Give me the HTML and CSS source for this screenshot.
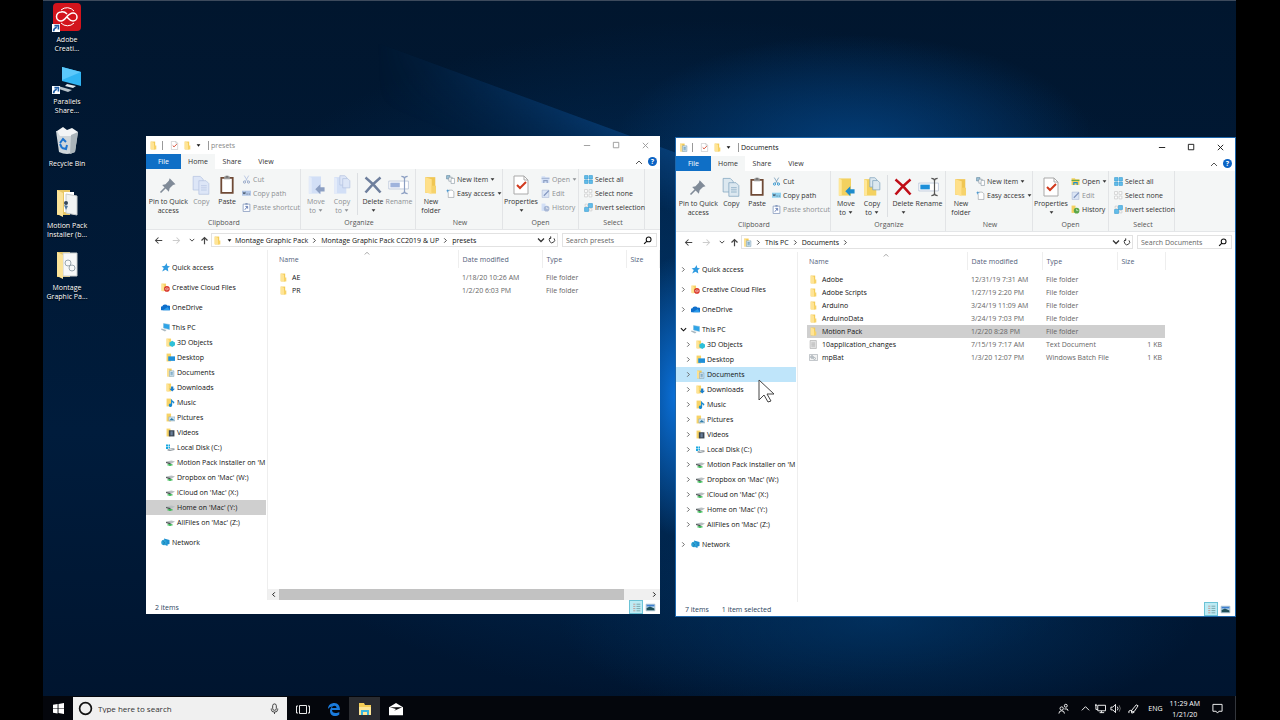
FILE: index.html
```html
<!DOCTYPE html>
<html lang="en">
<head>
  <meta charset="UTF-8">
  <meta name="viewport" content="width=device-width, initial-scale=1.0">
  <title>Desktop</title>
  <link rel="stylesheet" href="styles.css">
</head>
<body>
  <!-- Icon sprite -->
  <svg class="sprite" aria-hidden="true">
    <symbol id="folder" viewBox="0 0 16 16"><path d="M3 1h8v14H3z" fill="#f3cb55"/><path d="M3 1l6 2v12l-6-1z" fill="#ffe495"/><path d="M9 8h4v7H9z" fill="#f7d367"/></symbol>
    <symbol id="docfolder" viewBox="0 0 16 16"><path d="M2 1h8v14H2z" fill="#f3cb55"/><path d="M2 1l4 2v12l-4-1z" fill="#ffe495"/><path d="M6 5h8v10H6z" fill="#d5e6f0" stroke="#7fa3b8"/><path d="M8 8h4M8 10h4M8 12h4" stroke="#3f7fa8"/></symbol>
    <symbol id="check-page" viewBox="0 0 16 20"><path d="M1 1h10l4 4v14H1z" fill="#fff" stroke="#a9a9a9"/><path d="M11 1v4h4" fill="none" stroke="#a9a9a9"/><path d="M4 10l3 3 6-6" fill="none" stroke="#d13a1e" stroke-width="2"/></symbol>
    <symbol id="caret" viewBox="0 0 8 8"><path d="M1 2h6L4 6z" fill="currentColor"/></symbol>
    <symbol id="chev-r" viewBox="0 0 8 8"><path d="M2.500 1.500L5 4 2.500 6.500" fill="none" stroke="currentColor" stroke-width="1.100"/></symbol>
    <symbol id="chev-d" viewBox="0 0 8 8"><path d="M1 2.500l3 3 3-3" fill="none" stroke="currentColor" stroke-width="1.300"/></symbol>
    <symbol id="chev-u" viewBox="0 0 8 8"><path d="M1 6l3-3 3 3" fill="none" stroke="currentColor"/></symbol>
    <symbol id="back" viewBox="0 0 12 12"><path d="M11 6H2M6 2L2 6l4 4" fill="none" stroke="currentColor" stroke-width="1.400"/></symbol>
    <symbol id="forward" viewBox="0 0 12 12"><path d="M1 6h9M6 2l4 4-4 4" fill="none" stroke="currentColor" stroke-width="1.400"/></symbol>
    <symbol id="up" viewBox="0 0 12 12"><path d="M6 11V2M2 6l4-4 4 4" fill="none" stroke="currentColor" stroke-width="1.600"/></symbol>
    <symbol id="refresh" viewBox="0 0 12 12"><path d="M9 3.500A4 4 0 1 1 4 2.600M4 .5v3.200H1.500" fill="none" stroke="currentColor" stroke-width="1.400"/></symbol>
    <symbol id="lens" viewBox="0 0 12 12"><circle cx="7.500" cy="4.500" r="3.200" fill="none" stroke="currentColor" stroke-width="1.400"/><path d="M5.300 6.800L1.500 10.600" stroke="currentColor" stroke-width="1.600"/></symbol>
    <symbol id="min" viewBox="0 0 10 10"><path d="M1 5h7" stroke="currentColor"/></symbol>
    <symbol id="max" viewBox="0 0 10 10"><path d="M1.500 1.500h6v6h-6z" fill="none" stroke="currentColor"/></symbol>
    <symbol id="close" viewBox="0 0 10 10"><path d="M2 2l6 6M8 2L2 8" stroke="currentColor"/></symbol>

    <symbol id="pin" viewBox="0 0 24 24"><path d="M14 4l7 7-3 1-4 4-1 4-8-8 4-1 4-4z" fill="#808b98"/><path d="M9 15l-6 6" stroke="#808b98" stroke-width="2"/></symbol>
    <symbol id="copy" viewBox="0 0 24 28"><path d="M1 2h10l4 4v15H1z" fill="var(--page)" stroke="var(--line)"/><path d="M9 8h10l4 4v15H9z" fill="var(--page)" stroke="var(--line)"/><path d="M12 15h8M12 18h8M12 21h8" stroke="var(--line)"/></symbol>
    <symbol id="paste" viewBox="0 0 24 28"><path d="M4 4h16v21H4z" fill="#fff" stroke="#6f4a36" stroke-width="2.500"/><path d="M8 2h8v4H8z" fill="#9a9a9a"/><path d="M10 1h4v3h-4z" fill="#777"/></symbol>
    <symbol id="cut" viewBox="0 0 16 16"><path d="M4 1l6 10M12 1L6 11" stroke="var(--line)" stroke-width="1.500"/><circle cx="4.500" cy="12.500" r="2" fill="none" stroke="var(--arrow)" stroke-width="1.500"/><circle cx="11.500" cy="12.500" r="2" fill="none" stroke="var(--arrow)" stroke-width="1.500"/></symbol>
    <symbol id="path" viewBox="0 0 16 16"><path d="M0 3h16v9H0z" fill="var(--sky)"/><path d="M2 5l1 4 1-3 1 3 1-4M8 9h2M12 9h2" fill="none" stroke="#345"/></symbol>
    <symbol id="shortcut" viewBox="0 0 16 16"><path d="M2 2h12v13H2z" fill="#fff" stroke="#8a9dc0" stroke-width="1.500"/><path d="M6 0h4v3H6z" fill="#8a9dc0"/><path d="M5 12l4-5M6 6h4v4" fill="none" stroke="#4d6aa8" stroke-width="1.500"/></symbol>
    <symbol id="move" viewBox="0 0 24 28"><path d="M2 2h17v24H2z" fill="var(--folder)"/><path d="M2 2l4 2v22H2z" fill="var(--folder2)"/><path d="M11 20l7-7v4h6v6h-6v4z" fill="var(--arrow)"/></symbol>
    <symbol id="copyto" viewBox="0 0 24 28"><path d="M1 3h17v23H1z" fill="var(--folder)"/><path d="M1 3l4 2v21H1z" fill="var(--folder2)"/><path d="M9 1h7l3 3v10H9z" fill="var(--page)" stroke="var(--line)"/><path d="M13 5h7l3 3v10H13z" fill="var(--page)" stroke="var(--line)"/></symbol>
    <symbol id="delete" viewBox="0 0 24 24"><path d="M3 3q10 8 18 18M21 3Q10 12 3 21" fill="none" stroke="var(--cross)" stroke-width="3"/></symbol>
    <symbol id="rename" viewBox="0 0 28 24"><path d="M1 7h25v10H1z" fill="#fff" stroke="#b5c2d8"/><path d="M3 9h12v6H3z" fill="var(--rename)"/><path d="M17 1q4 0 4 3v16q0 3-4 3M25 1q-4 0-4 3v16q0 3 4 3" fill="none" stroke="var(--ibeam)" stroke-width="1.500"/></symbol>
    <symbol id="bigfolder" viewBox="0 0 24 28"><path d="M4 3h14v22H4z" fill="#f0c653"/><path d="M4 3l9 3v21l-9-3z" fill="#ffe08a"/><path d="M13 15h6v11h-6z" fill="#f6d36b"/></symbol>
    <symbol id="newitem" viewBox="0 0 16 16"><path d="M1 1h6v6H1z" fill="#9cc3d9" stroke="#5b7f96"/><path d="M5 4h6v7H5z" fill="#fff" stroke="#7c8b96"/><path d="M9 6h6v9H9z" fill="#fff" stroke="#7c8b96"/></symbol>
    <symbol id="easy" viewBox="0 0 16 16"><path d="M5 2h6l3 3v10H4V6" fill="#fff" stroke="#8a8f96"/><path d="M1 3h5M3 1v5" stroke="#3d8ec9" stroke-width="1.500"/></symbol>
    <symbol id="open" viewBox="0 0 16 16"><path d="M1 2h6l1 2h7v10H1z" fill="var(--folder)"/><path d="M1 5h14v2H1z" fill="var(--green)"/><path d="M4 9h8v5h-2v-3H6v3H4z" fill="var(--arrow)"/></symbol>
    <symbol id="edit" viewBox="0 0 16 16"><path d="M2 2h12v13H2z" fill="#dbe5f5" stroke="#a5b4d2"/><path d="M5 12l9-9" stroke="#7f93bd" stroke-width="2"/></symbol>
    <symbol id="history" viewBox="0 0 16 16"><path d="M1 1h7v13H1z" fill="var(--folder)"/><circle cx="10" cy="10" r="5" fill="var(--green)"/><path d="M10 7v3h3" fill="none" stroke="#fff"/></symbol>
    <symbol id="selall" viewBox="0 0 16 16"><path d="M1 1h6v6H1zM9 1h6v6H9zM1 9h6v6H1zM9 9h6v6H9z" fill="#63bdea" stroke="#2d95cf"/></symbol>
    <symbol id="selnone" viewBox="0 0 16 16"><path d="M1 1h5v5H1zM9 1h5v5H9zM1 9h5v5H1zM9 9h5v5H9z" fill="#fff" stroke="#bbb"/></symbol>
    <symbol id="selinv" viewBox="0 0 16 16"><path d="M8 1h7v7H8zM1 8h7v7H1z" fill="#63bdea" stroke="#2d95cf"/><path d="M2 2h4v4H2zM10 10h4v4h-4z" fill="#fff" stroke="#bbb"/></symbol>

    <symbol id="star" viewBox="0 0 16 16"><path d="M10 0l1 5 5 1-4 3 1 6-5-3-6 3 3-6-4-3 6-1z" fill="#2f9be0"/></symbol>
    <symbol id="ccf" viewBox="0 0 16 16"><path d="M1 1h8v13H1z" fill="#f7d367"/><path d="M1 1l4 2v12l-4-1z" fill="#ffe495"/><circle cx="10.500" cy="10.500" r="5" fill="#d8352a"/><path d="M7.500 10.500q3-4 6 0-3 4-6 0z" fill="none" stroke="#fff"/></symbol>
    <symbol id="cloud" viewBox="2 2 16 12"><path d="M4 13a3.500 3.500 0 0 1 0-7 6 6 0 0 1 10-1 4 4 0 0 1 3 8z" fill="#0f6fcb"/><path d="M5 13l9-6 4 6z" fill="#2a9bea"/></symbol>
    <symbol id="pc" viewBox="0 0 18 16"><path d="M5 0l12 2v10L5 9z" fill="#2fa4e7" stroke="#7fb8d8"/><path d="M1 10l10 3-3 3-8-4z" fill="#a9b7c0"/></symbol>
    <symbol id="f3d" viewBox="0 0 16 16"><path d="M1 1h8v14H1z" fill="#f7d367"/><path d="M1 1l4 2v12l-4-1z" fill="#ffe495"/><path d="M6 8l5-3 5 3v5l-5 3-5-3z" fill="#2ec0d8"/></symbol>
    <symbol id="fdesk" viewBox="0 0 16 16"><path d="M1 1h8v14H1z" fill="#f7d367"/><path d="M4 6h12v8H4z" fill="#1e8fd8"/></symbol>
    <symbol id="fdown" viewBox="0 0 16 16"><path d="M1 1h8v14H1z" fill="#f7d367"/><path d="M1 1l4 2v12l-4-1z" fill="#ffe495"/><path d="M9 6h4v4h3l-5 5-5-5h3z" fill="#1a7dc9"/></symbol>
    <symbol id="fmusic" viewBox="0 0 16 16"><path d="M1 1h8v14H1z" fill="#f7d367"/><path d="M10 2q1 3 5 5l-1 3-3-3v6a3 3 0 1 1-2-3V2z" fill="#1788cf"/></symbol>
    <symbol id="fpic" viewBox="0 0 16 16"><path d="M1 1h8v14H1z" fill="#f7d367"/><path d="M5 7h11v7H5z" fill="#cfe6f2" stroke="#8ea7b5"/><path d="M6 13l4-4 5 4z" fill="#2f7ba8"/></symbol>
    <symbol id="fvid" viewBox="0 0 16 16"><path d="M1 1h7v14H1z" fill="#f7d367"/><path d="M5 4h10v11H5z" fill="#3a4653"/><path d="M8 6h4v7H8z" fill="#6a7f9a"/></symbol>
    <symbol id="disk" viewBox="0 0 18 16"><path d="M0 2h4v4H0zM5 2h3v4H5zM0 7h4v4H0zM5 7h3v3H5z" fill="#19a7e0"/><path d="M3 12l9-3 5 1v3l-9 2-5-1z" fill="#8f979d"/><path d="M5 12l7-2 4 1-7 2z" fill="#dde2e5"/></symbol>
    <symbol id="netdisk" viewBox="0 0 18 16"><path d="M0 6l11-2 7 2-8 5-10-3z" fill="#b9bfc2"/><path d="M0 7l9 2v3l-9-3z" fill="#4a5050"/><path d="M3 12.500h10M8 11v4" stroke="#2db54a" stroke-width="2.500"/></symbol>
    <symbol id="network" viewBox="0 0 18 16"><path d="M6 0l11 3v8l-4 1v3L8 13z" fill="#1e8fcf"/><circle cx="6" cy="8" r="5.500" fill="#2ea3d6"/><path d="M3 5l4 3-2 4" fill="none" stroke="#0d5f92"/></symbol>
    <symbol id="text" viewBox="0 0 16 16"><path d="M2 1h11v14H2z" fill="#eee" stroke="#999"/><path d="M4 4h7M4 6h7M4 8h7M4 10h7M4 12h7" stroke="#a6a6a6"/></symbol>
    <symbol id="bat" viewBox="0 0 18 16"><path d="M1 2h16v12H1z" fill="#f2f2f2" stroke="#8f979f"/><circle cx="6" cy="7" r="2.500" fill="none" stroke="#7d8a95" stroke-width="1.500"/><circle cx="11" cy="10" r="2" fill="none" stroke="#7d8a95"/></symbol>
    <symbol id="v-details" viewBox="0 0 20 20"><path d="M4 4h4M4 8h4M4 12h4M4 16h4" stroke="#c58e85" stroke-width="1.500"/><path d="M10 4h7M10 8h7M10 12h7M10 16h7" stroke="#6f9a9f" stroke-width="1.500"/></symbol>
    <symbol id="v-large" viewBox="0 0 20 20"><path d="M2 4h16v12H2z" fill="#b9d7ea" stroke="#8fa9b8"/><path d="M3 11l6-3 8 4v3H3z" fill="#1f4f58"/><path d="M3 5h14v3H3z" fill="#3f7fd0"/></symbol>
    <symbol id="link" viewBox="0 0 10 10"><path d="M0 0h10v10H0z" fill="#fff"/><path d="M2 9q0-4 4-5M3 2h5v5" fill="none" stroke="#1f5fa8" stroke-width="2"/></symbol>
  </svg>

  <div class="desktop">
    <main class="workspace">
      <svg class="wallpaper" viewBox="0 0 1200 700" preserveAspectRatio="none" aria-hidden="true">
        <defs>
          <linearGradient id="ray" gradientUnits="userSpaceOnUse" x1="520" y1="110" x2="500" y2="165">
            <stop offset="0" stop-color="#0a4a8c" stop-opacity=".6"/>
            <stop offset="1" stop-color="#0a4a8c" stop-opacity="0"/>
          </linearGradient>
        </defs>
        <path d="M330 40L640 154v100L330 140z" fill="url(#ray)"/>
      </svg>
      <nav class="shortcuts" aria-label="Desktop">
        <a class="shortcut" href="#">
          <svg viewBox="0 0 30 30"><rect x="1" y="1" width="28" height="28" rx="4" fill="#d3141c"/><path d="M15 12c-2-2-4-2.500-6-2a4.500 4.500 0 0 0 0 9c5 0 6-8 12-8a4 4 0 0 1 0 8c-3 0-4-2-6-4" fill="none" stroke="#fff" stroke-width="1.500"/><path d="M9 8a9 9 0 0 1 13 1M22 21a9 9 0 0 1-13 0" fill="none" stroke="#fff"/><use href="#link" x="0" y="22" width="8" height="8"/></svg>
          <span>Adobe Creati...</span>
        </a>
        <a class="shortcut" href="#">
          <svg viewBox="0 0 30 30"><path d="M10 3l19 5v14l-19-5z" fill="#30b4f2"/><path d="M10 3l19 5-19 8z" fill="#5cc8fa"/><path d="M15 20l9 2-3 2-8-2z" fill="#dfe6ea"/><path d="M6 22l14 4-4 2-12-4z" fill="#b7c2c9"/><use href="#link" x="0" y="22" width="8" height="8"/></svg>
          <span>Parallels Share...</span>
        </a>
        <a class="shortcut" href="#">
          <svg viewBox="0 0 30 30"><path d="M4 5l3 21q8 4 16 0l3-20z" fill="#cfd6da"/><path d="M5 5l6-4 4 3 5-2 6 4-4 4H8z" fill="#f3f5f6"/><path d="M19 9l7-3-3 20-5 2z" fill="#aab4ba"/><path d="M8 17l3-4 3 3M15 19l-1 4-4-1M10 22l-2-4" fill="none" stroke="#1d74cf" stroke-width="2"/></svg>
          <span class="full">Recycle Bin</span>
        </a>
        <a class="shortcut" href="#">
          <svg viewBox="0 0 30 30"><path d="M5 2h13v25H5z" fill="#e8c766"/><path d="M12 4h10v20H12z" fill="#fff"/><path d="M14 6l11 2v19l-11-2z" fill="#f1f3f3" stroke="#c8cccc"/><path d="M5 2l6 3v24l-6-3z" fill="#fbe398"/><circle cx="14" cy="15" r="2" fill="#33475c"/><path d="M12 17l4 1-2 4z" fill="#5279a0"/></svg>
          <span class="full">Motion Pack Installer (b...</span>
        </a>
        <a class="shortcut" href="#">
          <svg viewBox="0 0 30 30"><path d="M5 2h13v25H5z" fill="#e8c766"/><path d="M11 3h14v23H11z" fill="#f7f8f8" stroke="#c8cccc"/><path d="M5 2l6 3v24l-6-3z" fill="#fbe398"/><circle cx="16" cy="13" r="3" fill="none" stroke="#9aa6ae"/><circle cx="20" cy="18" r="3" fill="none" stroke="#9aa6ae"/></svg>
          <span class="full">Montage Graphic Pa...</span>
        </a>
      </nav>

      <section class="window window-presets" aria-label="presets">
        <header class="titlebar">
          <div class="quick">
            <svg class="ico"><use href="#folder"/></svg><i></i>
            <svg class="ico"><use href="#check-page"/></svg>
            <svg class="ico"><use href="#folder"/></svg>
            <svg class="tiny"><use href="#caret"/></svg><i></i>
          </div>
          <h1>presets</h1>
          <button class="wbtn" aria-label="Minimize"><svg><use href="#min"/></svg></button>
          <button class="wbtn" aria-label="Maximize"><svg><use href="#max"/></svg></button>
          <button class="wbtn" aria-label="Close"><svg><use href="#close"/></svg></button>
        </header>
        <div class="tabs">
          <button class="tab file">File</button>
          <button class="tab current">Home</button>
          <button class="tab">Share</button>
          <button class="tab">View</button>
          <button class="collapse" aria-label="Collapse ribbon"><svg><use href="#chev-u"/></svg></button>
          <button class="help" aria-label="Help">?</button>
        </div>
        <div class="ribbon">
          <div class="group clipboard">
            <div class="tools">
              <button class="big wide"><svg><use href="#pin"/></svg>Pin to Quick access</button>
              <button class="big off"><svg><use href="#copy"/></svg>Copy</button>
              <button class="big"><svg><use href="#paste"/></svg>Paste</button>
              <div class="stack">
                <button class="small off"><svg><use href="#cut"/></svg>Cut</button>
                <button class="small off"><svg><use href="#path"/></svg>Copy path</button>
                <button class="small off"><svg><use href="#shortcut"/></svg>Paste shortcut</button>
              </div>
            </div>
            <p>Clipboard</p>
          </div>
          <div class="group organize">
            <div class="tools">
              <button class="big off"><svg><use href="#move"/></svg>Move<span>to <svg class="tiny"><use href="#caret"/></svg></span></button>
              <button class="big off"><svg><use href="#copyto"/></svg>Copy<span>to <svg class="tiny"><use href="#caret"/></svg></span></button>
              <hr>
              <button class="big dim"><svg><use href="#delete"/></svg>Delete<span><svg class="tiny"><use href="#caret"/></svg></span></button>
              <button class="big off"><svg><use href="#rename"/></svg>Rename</button>
            </div>
            <p>Organize</p>
          </div>
          <div class="group new">
            <div class="tools">
              <button class="big"><svg><use href="#bigfolder"/></svg>New folder</button>
              <div class="stack">
                <button class="small"><svg><use href="#newitem"/></svg>New item <svg class="tiny"><use href="#caret"/></svg></button>
                <button class="small"><svg><use href="#easy"/></svg>Easy access <svg class="tiny"><use href="#caret"/></svg></button>
              </div>
            </div>
            <p>New</p>
          </div>
          <div class="group opening">
            <div class="tools">
              <button class="big prop"><svg><use href="#check-page"/></svg>Properties<span><svg class="tiny"><use href="#caret"/></svg></span></button>
              <div class="stack">
                <button class="small off"><svg><use href="#open"/></svg>Open <svg class="tiny"><use href="#caret"/></svg></button>
                <button class="small off"><svg><use href="#edit"/></svg>Edit</button>
                <button class="small off"><svg><use href="#history"/></svg>History</button>
              </div>
            </div>
            <p>Open</p>
          </div>
          <div class="group select">
            <div class="tools">
              <div class="stack">
                <button class="small"><svg><use href="#selall"/></svg>Select all</button>
                <button class="small"><svg><use href="#selnone"/></svg>Select none</button>
                <button class="small"><svg><use href="#selinv"/></svg>Invert selection</button>
              </div>
            </div>
            <p>Select</p>
          </div>
        </div>
        <div class="address">
          <button class="nav-btn" aria-label="Back"><svg><use href="#back"/></svg></button>
          <button class="nav-btn faint" aria-label="Forward"><svg><use href="#forward"/></svg></button>
          <button class="nav-btn slim" aria-label="Recent"><svg class="tiny"><use href="#chev-d"/></svg></button>
          <button class="nav-btn slim" aria-label="Up"><svg><use href="#up"/></svg></button>
          <div class="crumbs">
            <svg class="ico"><use href="#folder"/></svg>
            <svg class="tiny"><use href="#caret"/></svg>
            <a href="#">Montage Graphic Pack</a><svg class="sep"><use href="#chev-r"/></svg>
            <a href="#">Montage Graphic Pack CC2019 &amp; UP</a><svg class="sep"><use href="#chev-r"/></svg>
            <a href="#">presets</a>
            <button class="end" aria-label="History"><svg><use href="#chev-d"/></svg></button>
            <button class="end" aria-label="Refresh"><svg><use href="#refresh"/></svg></button>
          </div>
          <label class="search"><input type="text" placeholder="Search presets" aria-label="Search presets"><svg><use href="#lens"/></svg></label>
        </div>
        <div class="content">
          <nav class="tree plain" aria-label="Folders">
            <a class="root" href="#"><svg class="ico"><use href="#star"/></svg>Quick access</a>
            <a class="root" href="#"><svg class="ico"><use href="#ccf"/></svg>Creative Cloud Files</a>
            <a class="root" href="#"><svg class="ico"><use href="#cloud"/></svg>OneDrive</a>
            <a class="root" href="#"><svg class="ico"><use href="#pc"/></svg>This PC</a>
            <a href="#"><svg class="ico"><use href="#f3d"/></svg>3D Objects</a>
            <a href="#"><svg class="ico"><use href="#fdesk"/></svg>Desktop</a>
            <a href="#"><svg class="ico"><use href="#docfolder"/></svg>Documents</a>
            <a href="#"><svg class="ico"><use href="#fdown"/></svg>Downloads</a>
            <a href="#"><svg class="ico"><use href="#fmusic"/></svg>Music</a>
            <a href="#"><svg class="ico"><use href="#fpic"/></svg>Pictures</a>
            <a href="#"><svg class="ico"><use href="#fvid"/></svg>Videos</a>
            <a href="#"><svg class="ico"><use href="#disk"/></svg>Local Disk (C:)</a>
            <a href="#"><svg class="ico"><use href="#netdisk"/></svg>Motion Pack Installer on 'M</a>
            <a href="#"><svg class="ico"><use href="#netdisk"/></svg>Dropbox on 'Mac' (W:)</a>
            <a href="#"><svg class="ico"><use href="#netdisk"/></svg>iCloud on 'Mac' (X:)</a>
            <a class="selected" href="#"><svg class="ico"><use href="#netdisk"/></svg>Home on 'Mac' (Y:)</a>
            <a href="#"><svg class="ico"><use href="#netdisk"/></svg>AllFiles on 'Mac' (Z:)</a>
            <a class="root" href="#"><svg class="ico"><use href="#network"/></svg>Network</a>
          </nav>
          <div class="files">
            <svg class="sort"><use href="#chev-u"/></svg>
            <table>
              <colgroup><col class="c-name-l"><col class="c-date-l"><col class="c-type-l"><col></colgroup>
              <thead><tr><th>Name</th><th>Date modified</th><th>Type</th><th>Size</th></tr></thead>
              <tbody>
                <tr><td><svg class="ico"><use href="#folder"/></svg>AE</td><td>1/18/20 10:26 AM</td><td>File folder</td><td></td></tr>
                <tr><td><svg class="ico"><use href="#folder"/></svg>PR</td><td>1/2/20 6:03 PM</td><td>File folder</td><td></td></tr>
              </tbody>
            </table>
            <div class="hscroll">
              <button aria-label="Scroll left"><svg class="sep flip"><use href="#chev-r"/></svg></button>
              <div class="thumb"></div>
              <button aria-label="Scroll right"><svg class="sep"><use href="#chev-r"/></svg></button>
            </div>
          </div>
        </div>
        <footer class="status">
          <span>2 items</span>
          <button class="view on" aria-label="Details"><svg><use href="#v-details"/></svg></button>
          <button class="view" aria-label="Large icons"><svg><use href="#v-large"/></svg></button>
        </footer>
      </section>

      <section class="window window-documents" aria-label="Documents">
        <header class="titlebar">
          <div class="quick">
            <svg class="ico"><use href="#docfolder"/></svg><i></i>
            <svg class="ico"><use href="#check-page"/></svg>
            <svg class="ico"><use href="#folder"/></svg>
            <svg class="tiny"><use href="#caret"/></svg><i></i>
          </div>
          <h1>Documents</h1>
          <button class="wbtn" aria-label="Minimize"><svg><use href="#min"/></svg></button>
          <button class="wbtn" aria-label="Maximize"><svg><use href="#max"/></svg></button>
          <button class="wbtn" aria-label="Close"><svg><use href="#close"/></svg></button>
        </header>
        <div class="tabs">
          <button class="tab file">File</button>
          <button class="tab current">Home</button>
          <button class="tab">Share</button>
          <button class="tab">View</button>
          <button class="collapse" aria-label="Collapse ribbon"><svg><use href="#chev-u"/></svg></button>
          <button class="help" aria-label="Help">?</button>
        </div>
        <div class="ribbon">
          <div class="group clipboard">
            <div class="tools">
              <button class="big wide"><svg><use href="#pin"/></svg>Pin to Quick access</button>
              <button class="big"><svg><use href="#copy"/></svg>Copy</button>
              <button class="big"><svg><use href="#paste"/></svg>Paste</button>
              <div class="stack">
                <button class="small"><svg><use href="#cut"/></svg>Cut</button>
                <button class="small"><svg><use href="#path"/></svg>Copy path</button>
                <button class="small off"><svg><use href="#shortcut"/></svg>Paste shortcut</button>
              </div>
            </div>
            <p>Clipboard</p>
          </div>
          <div class="group organize">
            <div class="tools">
              <button class="big"><svg><use href="#move"/></svg>Move<span>to <svg class="tiny"><use href="#caret"/></svg></span></button>
              <button class="big"><svg><use href="#copyto"/></svg>Copy<span>to <svg class="tiny"><use href="#caret"/></svg></span></button>
              <hr>
              <button class="big"><svg><use href="#delete"/></svg>Delete<span><svg class="tiny"><use href="#caret"/></svg></span></button>
              <button class="big"><svg><use href="#rename"/></svg>Rename</button>
            </div>
            <p>Organize</p>
          </div>
          <div class="group new">
            <div class="tools">
              <button class="big"><svg><use href="#bigfolder"/></svg>New folder</button>
              <div class="stack">
                <button class="small"><svg><use href="#newitem"/></svg>New item <svg class="tiny"><use href="#caret"/></svg></button>
                <button class="small"><svg><use href="#easy"/></svg>Easy access <svg class="tiny"><use href="#caret"/></svg></button>
              </div>
            </div>
            <p>New</p>
          </div>
          <div class="group opening">
            <div class="tools">
              <button class="big prop"><svg><use href="#check-page"/></svg>Properties<span><svg class="tiny"><use href="#caret"/></svg></span></button>
              <div class="stack">
                <button class="small"><svg><use href="#open"/></svg>Open <svg class="tiny"><use href="#caret"/></svg></button>
                <button class="small off"><svg><use href="#edit"/></svg>Edit</button>
                <button class="small"><svg><use href="#history"/></svg>History</button>
              </div>
            </div>
            <p>Open</p>
          </div>
          <div class="group select">
            <div class="tools">
              <div class="stack">
                <button class="small"><svg><use href="#selall"/></svg>Select all</button>
                <button class="small"><svg><use href="#selnone"/></svg>Select none</button>
                <button class="small"><svg><use href="#selinv"/></svg>Invert selection</button>
              </div>
            </div>
            <p>Select</p>
          </div>
        </div>
        <div class="address">
          <button class="nav-btn" aria-label="Back"><svg><use href="#back"/></svg></button>
          <button class="nav-btn faint" aria-label="Forward"><svg><use href="#forward"/></svg></button>
          <button class="nav-btn slim" aria-label="Recent"><svg class="tiny"><use href="#chev-d"/></svg></button>
          <button class="nav-btn slim" aria-label="Up"><svg><use href="#up"/></svg></button>
          <div class="crumbs">
            <svg class="ico"><use href="#docfolder"/></svg>
            <svg class="sep"><use href="#chev-r"/></svg>
            <a href="#">This PC</a><svg class="sep"><use href="#chev-r"/></svg>
            <a href="#">Documents</a><svg class="sep"><use href="#chev-r"/></svg>
            <button class="end" aria-label="History"><svg><use href="#chev-d"/></svg></button>
            <button class="end" aria-label="Refresh"><svg><use href="#refresh"/></svg></button>
          </div>
          <label class="search"><input type="text" placeholder="Search Documents" aria-label="Search Documents"><svg><use href="#lens"/></svg></label>
        </div>
        <div class="content">
          <nav class="tree" aria-label="Folders">
            <a class="root" href="#"><svg class="sep"><use href="#chev-r"/></svg><svg class="ico"><use href="#star"/></svg>Quick access</a>
            <a class="root" href="#"><svg class="sep"><use href="#chev-r"/></svg><svg class="ico"><use href="#ccf"/></svg>Creative Cloud Files</a>
            <a class="root" href="#"><svg class="sep"><use href="#chev-r"/></svg><svg class="ico"><use href="#cloud"/></svg>OneDrive</a>
            <a class="root" href="#"><svg class="sep expanded"><use href="#chev-d"/></svg><svg class="ico"><use href="#pc"/></svg>This PC</a>
            <a href="#"><svg class="sep"><use href="#chev-r"/></svg><svg class="ico"><use href="#f3d"/></svg>3D Objects</a>
            <a href="#"><svg class="sep"><use href="#chev-r"/></svg><svg class="ico"><use href="#fdesk"/></svg>Desktop</a>
            <a class="hovered" href="#"><svg class="sep"><use href="#chev-r"/></svg><svg class="ico"><use href="#docfolder"/></svg>Documents</a>
            <a href="#"><svg class="sep"><use href="#chev-r"/></svg><svg class="ico"><use href="#fdown"/></svg>Downloads</a>
            <a href="#"><svg class="sep"><use href="#chev-r"/></svg><svg class="ico"><use href="#fmusic"/></svg>Music</a>
            <a href="#"><svg class="sep"><use href="#chev-r"/></svg><svg class="ico"><use href="#fpic"/></svg>Pictures</a>
            <a href="#"><svg class="sep"><use href="#chev-r"/></svg><svg class="ico"><use href="#fvid"/></svg>Videos</a>
            <a href="#"><svg class="sep"><use href="#chev-r"/></svg><svg class="ico"><use href="#disk"/></svg>Local Disk (C:)</a>
            <a href="#"><svg class="sep"><use href="#chev-r"/></svg><svg class="ico"><use href="#netdisk"/></svg>Motion Pack Installer on 'M</a>
            <a href="#"><svg class="sep"><use href="#chev-r"/></svg><svg class="ico"><use href="#netdisk"/></svg>Dropbox on 'Mac' (W:)</a>
            <a href="#"><svg class="sep"><use href="#chev-r"/></svg><svg class="ico"><use href="#netdisk"/></svg>iCloud on 'Mac' (X:)</a>
            <a href="#"><svg class="sep"><use href="#chev-r"/></svg><svg class="ico"><use href="#netdisk"/></svg>Home on 'Mac' (Y:)</a>
            <a href="#"><svg class="sep"><use href="#chev-r"/></svg><svg class="ico"><use href="#netdisk"/></svg>AllFiles on 'Mac' (Z:)</a>
            <a class="root" href="#"><svg class="sep"><use href="#chev-r"/></svg><svg class="ico"><use href="#network"/></svg>Network</a>
          </nav>
          <div class="files">
            <svg class="sort"><use href="#chev-u"/></svg>
            <table class="narrow">
              <colgroup><col class="c-name"><col class="c-date"><col class="c-type"><col class="c-size"></colgroup>
              <thead><tr><th>Name</th><th>Date modified</th><th>Type</th><th>Size</th></tr></thead>
              <tbody>
                <tr><td><svg class="ico"><use href="#folder"/></svg>Adobe</td><td>12/31/19 7:31 AM</td><td>File folder</td><td></td></tr>
                <tr><td><svg class="ico"><use href="#folder"/></svg>Adobe Scripts</td><td>1/27/19 2:20 PM</td><td>File folder</td><td></td></tr>
                <tr><td><svg class="ico"><use href="#folder"/></svg>Arduino</td><td>3/24/19 11:09 AM</td><td>File folder</td><td></td></tr>
                <tr><td><svg class="ico"><use href="#folder"/></svg>ArduinoData</td><td>3/24/19 7:03 PM</td><td>File folder</td><td></td></tr>
                <tr class="selected"><td><svg class="ico"><use href="#folder"/></svg>Motion Pack</td><td>1/2/20 8:28 PM</td><td>File folder</td><td></td></tr>
                <tr><td><svg class="ico"><use href="#text"/></svg>10application_changes</td><td>7/15/19 7:17 AM</td><td>Text Document</td><td>1 KB</td></tr>
                <tr><td><svg class="ico"><use href="#bat"/></svg>mpBat</td><td>1/3/20 12:07 PM</td><td>Windows Batch File</td><td>1 KB</td></tr>
              </tbody>
            </table>
          </div>
        </div>
        <footer class="status">
          <span>7 items</span><span>1 item selected</span>
          <button class="view on" aria-label="Details"><svg><use href="#v-details"/></svg></button>
          <button class="view" aria-label="Large icons"><svg><use href="#v-large"/></svg></button>
        </footer>
      </section>

      <svg class="cursor" viewBox="0 0 17 24"><path d="M1 1v20l5-5 4 7 3-1-4-7h7z" fill="#fff" stroke="#444"/></svg>
    </main>

    <footer class="taskbar">
      <button class="start" aria-label="Start"><svg viewBox="0 0 12 12"><path d="M0 2l5-1v5H0zM6 1l6-1v6H6zM0 6.500h5v5l-5-1zM6 6.500h6V12l-6-1z" fill="#fff"/></svg></button>
      <label class="taskbar-search">
        <svg viewBox="0 0 14 14"><circle cx="7" cy="7" r="5.500" fill="none" stroke="#111" stroke-width="1.600"/></svg>
        <input type="text" placeholder="Type here to search" aria-label="Type here to search">
        <svg viewBox="0 0 12 12"><rect x="4" y="1" width="4" height="7" rx="2" fill="none" stroke="#333"/><path d="M2.500 6v1a3.500 3 0 0 0 7 0V6M6 10v2" fill="none" stroke="#333"/></svg>
      </label>
      <button class="app" aria-label="Task view"><svg viewBox="0 0 14 14"><path d="M3.500 3.500h7v8h-7zM2 4H.5v7H2M12 4h1.500v7H12" fill="none" stroke="#e8e8e8"/></svg></button>
      <button class="app" aria-label="Edge"><svg viewBox="0 0 14 14"><path d="M1 7C1 3 4 1 7.500 1 11 1 13 4 13 8H5c0 2 1.500 3 3.500 3 1.500 0 2.500-.4 3.800-1v2.500C11 13.500 9.500 14 8 14c-3 0-5-2-5-5 0-2 1-3.500 2.500-4.500C3.500 4.600 2 5.500 1 7zm4-1h4.500C9.500 4.500 8.800 3.800 7.500 3.800S5.200 4.700 5 6z" fill="#1a7bdc"/></svg></button>
      <button class="app active" aria-label="File Explorer"><svg viewBox="0 0 14 14"><path d="M1 1h5l1 2h6v10H1z" fill="#f3cd57"/><path d="M1 5h12v8H1z" fill="#fde596"/><path d="M3 8h8v5H9v-3H5v3H3z" fill="#39b5dd"/></svg></button>
      <button class="app" aria-label="Mail"><svg viewBox="0 0 16 14"><path d="M0 5l8-5 8 5v9H0z" fill="#fff"/><path d="M1 5h14l-9 4 2-2z" fill="#0a0a0c"/></svg></button>
      <div class="tray">
        <svg viewBox="0 0 12 12"><circle cx="4" cy="6" r="1.800" fill="none" stroke="#fff"/><circle cx="8.500" cy="3" r="1.600" fill="none" stroke="#fff"/><path d="M1 11.500q0-3 3-3t3 3M7 6.500q4-1 4 2" fill="none" stroke="#fff"/></svg>
        <svg class="gap-l" viewBox="0 0 12 12"><path d="M2 8l4-4 4 4" fill="none" stroke="#fff"/></svg>
        <svg class="gap-s" viewBox="0 0 12 12"><path d="M3 2.500h8.500v6H3zM5 10.500h5M7 8.500v2M1 1v6h2M0 2.500h2" fill="none" stroke="#fff"/></svg>
        <svg class="gap-s" viewBox="0 0 12 12"><path d="M1 4.500h2l3-3v9l-3-3H1z" fill="none" stroke="#fff"/><path d="M8 4q1.500 2 0 4" fill="none" stroke="#fff"/><path d="M10 2.500q2.500 3.500 0 7" fill="none" stroke="#777"/></svg>
        <svg class="gap-m" viewBox="0 0 12 12"><path d="M4 8l5-6 2 1-4 6-3 1zM1 11q-1-3 2-3 2 0 1 2t3 0" fill="none" stroke="#fff"/></svg>
        <span class="lang">ENG</span>
        <time>11:29 AM<br>1/21/20</time>
        <svg class="note" viewBox="0 0 12 12"><path d="M1 1.500h10v7.500H7.500L6 11 4.500 9H1z" fill="none" stroke="#fff"/></svg>
      </div>
    </footer>
  </div>
</body>
</html>
```
FILE: styles.css
```css
* {
  box-sizing: border-box;
}

body {
  margin: 0;
  background: #000;
  font-family: "Open Sans", "Noto Sans", sans-serif;
  font-size: 7px;
  line-height: 9px;
  color: #111;
}

a {
  color: inherit;
  text-decoration: none;
}

button,
input {
  margin: 0;
  padding: 0;
  border: none;
  background: none;
  font: inherit;
  color: inherit;
}

svg {
  display: block;
  flex: none;
}

.sprite {
  position: absolute;
  width: 0;
  height: 0;
}

.ico {
  width: 9px;
  height: 9px;
}

.sep {
  width: 7px;
  height: 7px;
}

.tiny {
  width: 5px;
  height: 5px;
}

/* Desktop */

.desktop {
  display: flex;
  flex-direction: column;
  height: 100vh;
  margin: 0 44px 0 43px;
  border-top: 1px solid #3d4a5c;
  background:
    radial-gradient(ellipse 50px 140px at 53% 55%, #0b6fd6, rgba(11, 111, 214, 0)),
    radial-gradient(ellipse 240px 110px at 68% 20%, rgba(4, 68, 132, 0.8), rgba(2, 50, 100, 0)),
    radial-gradient(ellipse 320px 110px at 70% 86%, rgba(2, 60, 114, 0.6), rgba(2, 50, 100, 0)),
    radial-gradient(ellipse 560px 340px at 56% 50%, #003468, rgba(0, 40, 80, 0)),
    linear-gradient(#01162e, #001c3c 60%, #00142e);
}

.workspace {
  position: relative;
  flex: 1;
  overflow: hidden;
}

.wallpaper {
  position: absolute;
  inset: 0;
  width: 100%;
  height: 100%;
  mask-image: linear-gradient(90deg, transparent 28%, #000 50%);
}

.shortcuts {
  position: relative;
  display: grid;
  grid-auto-rows: 62px;
  width: 48px;
}

.shortcut {
  display: flex;
  flex-direction: column;
  align-items: center;
  color: #fff;
  text-align: center;
  text-shadow: 0 1px 1px #000;
}

.shortcut svg {
  width: 30px;
  height: 30px;
  margin: 1px 0 3px;
}

.shortcut span {
  width: 34px;
}

.shortcut .full {
  width: 100%;
}

/* Explorer window */

.window {
  position: absolute;
  display: flex;
  flex-direction: column;
  background: #fff;
  overflow: hidden;
  --page: #dce8f0;
  --line: #7ba0bb;
  --arrow: #1e8ccc;
  --sky: #8fd0ee;
  --folder: #f3d160;
  --folder2: #ffe798;
  --cross: #c00d17;
  --rename: #1c8fd9;
  --ibeam: #555;
  --green: #5aa648;
}

.window-presets {
  inset: 135px 576px 82px 103px;
}

.window-documents {
  inset: 137px 1px 80px 633px;
  outline: 1px solid #1d66ab;
}

.titlebar {
  display: flex;
  align-items: center;
  height: 18px;
}

.quick {
  display: flex;
  align-items: center;
  gap: 4px;
  padding: 0 2px 0 3px;
}

.quick i {
  width: 1px;
  height: 9px;
  margin-right: 3px;
  background: #999;
}

.quick i:last-child {
  margin: 0 0 0 3px;
}

.titlebar h1 {
  flex: 1;
  margin: 0;
  font-size: 7px;
  font-weight: 400;
  color: #111;
}

.window-presets .wbtn {
  color: #999;
}

.window-presets .titlebar h1 {
  color: #888;
}

.wbtn {
  display: grid;
  place-items: center;
  width: 29px;
  height: 18px;
}

.wbtn svg {
  width: 9px;
  height: 9px;
}

.tabs {
  display: flex;
  align-items: center;
  height: 15px;
}

.tab {
  width: 34px;
  height: 15px;
  color: #333;
}

.tab.file {
  width: 35px;
  background: #0f6fc6;
  color: #fff;
}

.tab.current {
  background: #f4f6f6;
}

.collapse {
  margin-left: auto;
  color: #555;
}

.collapse svg {
  width: 8px;
  height: 8px;
}

.help {
  width: 9px;
  height: 9px;
  margin: 0 3px 0 5px;
  border-radius: 50%;
  background: #0b63c4;
  color: #fff;
  font-weight: 700;
}

/* Ribbon */

.ribbon {
  display: flex;
  height: 61px;
  border-bottom: 1px solid #e4e6e8;
  background: #f4f6f6;
  color: #333;
}

.group {
  display: flex;
  flex: none;
  flex-direction: column;
  border-right: 1px solid #e2e4e6;
}

.clipboard {
  width: 155px;
  padding-left: 2px;
}

.organize {
  width: 115px;
  padding-left: 2px;
}

.new {
  width: 87px;
  padding-left: 2px;
}

.opening {
  width: 76px;
}

.select {
  width: 66px;
  padding-left: 3px;
}

.group p {
  margin: auto 0 2px;
  text-align: center;
  color: #555;
}

.tools {
  display: flex;
  padding-top: 4px;
}

.tools hr {
  width: 1px;
  height: 42px;
  margin: 0 2px;
  border: none;
  background: #dcdfe2;
}

.big {
  display: flex;
  flex-direction: column;
  align-items: center;
  width: 26px;
}

.big > svg {
  width: 22px;
  height: 20px;
  margin: 2px 0;
}

.big span {
  display: flex;
  align-items: center;
  gap: 2px;
  height: 9px;
}

.big.wide {
  width: 41px;
}

.big.prop {
  width: 36px;
}

.stack {
  display: flex;
  flex-direction: column;
  gap: 5px;
  padding: 2px 0 0 2px;
}

.small {
  display: flex;
  align-items: center;
  gap: 2px;
  height: 9px;
  white-space: nowrap;
}

.small > svg:first-child {
  width: 9px;
  height: 9px;
}

.off {
  color: #8d9094;
  --page: #dde6f7;
  --line: #b3c2e0;
  --arrow: #8c9fc2;
  --sky: #b4c8e8;
  --folder: #d2dff6;
  --folder2: #e3ebf9;
  --rename: #9fb3dc;
  --ibeam: #8c9fc2;
  --green: #a8b8d6;
}

.dim {
  --cross: #6e7f9d;
}

/* Address bar */

.address {
  display: flex;
  align-items: center;
  height: 20px;
  padding: 3px;
}

.nav-btn {
  display: grid;
  place-items: center;
  width: 18px;
  color: #444;
}

.nav-btn.slim {
  width: 13px;
}

.nav-btn.faint {
  color: #ccc;
}

.nav-btn svg {
  width: 9px;
  height: 9px;
}

.nav-btn .tiny {
  width: 6px;
  height: 6px;
}

.crumbs {
  display: flex;
  flex: 1;
  align-items: center;
  gap: 3px;
  min-width: 0;
  height: 14px;
  padding: 0 1px;
  border: 1px solid #e2e2e2;
  white-space: nowrap;
}

.crumbs .tiny {
  margin-left: 2px;
}

.crumbs .sep {
  color: #444;
}

.end {
  color: #333;
}

.end svg {
  width: 8px;
  height: 8px;
}

.end:first-of-type {
  margin-left: auto;
}

.search {
  display: flex;
  align-items: center;
  width: 95px;
  height: 14px;
  margin-left: 4px;
  padding: 0 4px 0 3px;
  border: 1px solid #e2e2e2;
}

.search input {
  flex: 1;
  min-width: 0;
}

.search svg {
  width: 9px;
  height: 9px;
}

input::placeholder {
  color: #666;
  opacity: 1;
}

/* Folder tree and file list */

.content {
  display: flex;
  flex: 1;
  min-height: 0;
}

.tree {
  flex: none;
  width: 122px;
  padding: 10px 1px 0 0;
  border-right: 1px solid #eee;
}

.tree a {
  display: flex;
  align-items: center;
  gap: 2px;
  height: 15px;
  padding-left: 9px;
  overflow: hidden;
  white-space: nowrap;
}

.tree a.root {
  margin-bottom: 5px;
  padding-left: 4px;
}

.tree a.root:nth-child(4) {
  margin-bottom: 0;
}

.tree a.root:last-child {
  margin-top: 5px;
}

.tree .sep {
  margin-right: 2px;
  color: #666;
}

.tree .expanded {
  color: #111;
}

.tree.plain a {
  padding-left: 20px;
}

.tree.plain a.root {
  padding-left: 15px;
}

.selected,
.tree .selected {
  background: #cfcfcf;
}

.tree .hovered {
  background: #bfe5fa;
}

.files {
  position: relative;
  display: flex;
  flex: 1;
  flex-direction: column;
  min-width: 0;
}

.sort {
  position: absolute;
  top: 0;
  left: 96px;
  width: 6px;
  height: 6px;
  color: #888;
}

.window-documents .sort {
  left: 85px;
}

table {
  table-layout: fixed;
  width: calc(100% - 9px);
  margin-left: 9px;
  border-collapse: collapse;
}

table.narrow {
  width: 358px;
}

.c-name {
  width: 160px;
}

.c-date,
.c-type {
  width: 75px;
}

.c-size {
  width: 48px;
}

.c-name-l {
  width: 181px;
}

.c-date-l,
.c-type-l {
  width: 84px;
}

thead::after {
  content: "";
  display: block;
  height: 3px;
}

th {
  height: 18px;
  padding: 0 4px;
  border-right: 1px solid #eee;
  text-align: left;
  font-weight: 400;
  color: #52607a;
}

th:first-child {
  padding-left: 2px;
}

td {
  height: 13px;
  padding: 0 4px;
  white-space: nowrap;
  color: #666;
}

td:first-child {
  padding-left: 2px;
  color: #111;
}

td:last-child {
  padding-right: 3px;
  text-align: right;
}

td .ico {
  display: inline-block;
  margin-right: 4px;
  vertical-align: middle;
}

.hscroll {
  display: flex;
  height: 11px;
  margin-top: auto;
  background: #f0f0f0;
}

.hscroll button {
  display: grid;
  place-items: center;
  width: 11px;
}

.hscroll button:last-child {
  margin-left: auto;
}

.thumb {
  width: 88%;
  background: #c2c2c2;
}

.flip {
  transform: scaleX(-1);
}

.status {
  display: flex;
  align-items: center;
  height: 14px;
  padding: 0 3px 0 9px;
  color: #2b4560;
}

.status span {
  margin-right: 13px;
}

.view {
  display: grid;
  place-items: center;
  width: 14px;
  height: 14px;
}

.view.on {
  margin-left: auto;
  border: 1px solid #6cc3d6;
  background: #bdebf4;
}

.view svg {
  width: 11px;
  height: 11px;
}

.cursor {
  position: absolute;
  top: 378px;
  left: 715px;
  width: 17px;
  height: 24px;
}

/* Taskbar */

.taskbar {
  display: flex;
  align-items: center;
  height: 24px;
  padding-top: 1px;
  border-right: 1px solid #33363c;
  background: #04060c;
  color: #fff;
}

.taskbar button {
  display: grid;
  place-items: center;
  width: 31px;
  height: 23px;
}

.taskbar button svg {
  width: 14px;
  height: 14px;
}

.taskbar .start svg {
  width: 11px;
  height: 11px;
}

.taskbar .app.active {
  background: #2a2c31;
}

.taskbar-search {
  display: flex;
  align-items: center;
  gap: 5px;
  width: 214px;
  height: 23px;
  margin-left: -1px;
  padding: 0 7px 0 5px;
  background: #f0f0f0;
  font-size: 8px;
}

.taskbar-search input {
  flex: 1;
  min-width: 0;
}

.taskbar-search input::placeholder {
  color: #333;
}

.taskbar-search svg:first-child {
  width: 15px;
  height: 15px;
}

.taskbar-search svg:last-child {
  width: 11px;
  height: 11px;
}

.tray {
  display: flex;
  align-items: center;
  margin-left: auto;
  padding-right: 12px;
}

.tray svg {
  width: 11px;
  height: 11px;
}

.tray .gap-l {
  margin-left: 11px;
}

.tray .gap-m {
  margin-left: 7px;
}

.tray .gap-s {
  margin-left: 4px;
}

.lang {
  margin-left: 9px;
}

.tray time {
  margin: 0 12px 0 7px;
  line-height: 11px;
  text-align: center;
}
```
